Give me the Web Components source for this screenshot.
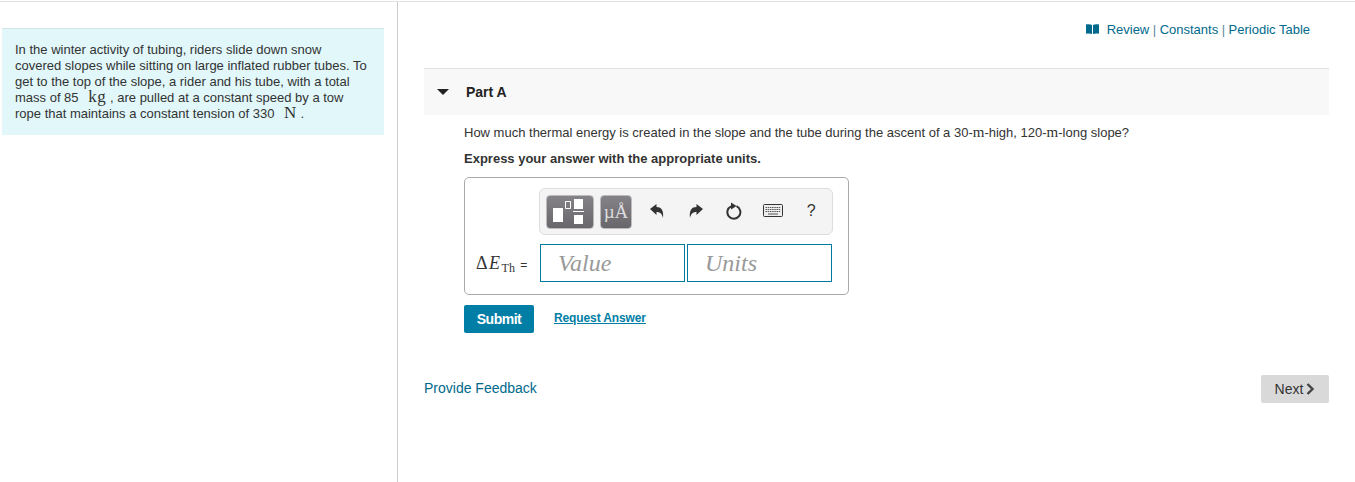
<!DOCTYPE html>
<html>
<head>
<meta charset="utf-8">
<title>Part A</title>
<style>
    html, body { margin: 0; height: 100%; }
    body { font-family: "Liberation Sans", Arial, sans-serif; font-size: 13px; color: #333; background: #fff; }
</style>
</head>
<body>
<assignment-page>
    <info-panel slot="left">
        In the winter activity of tubing, riders slide down snow covered slopes while sitting on large inflated rubber tubes. To get to the top of the slope, a rider and his tube, with a total mass of 85 <math-unit>kg</math-unit> , are pulled at a constant speed by a tow rope that maintains a constant tension of 330 <math-unit>N</math-unit> .
    </info-panel>
    <resource-links slot="right"></resource-links>
    <part-header slot="right">Part A</part-header>
    <part-body slot="right">
        How much thermal energy is created in the slope and the tube during the ascent of a 30-<math-unit tight>m</math-unit>-high, 120-<math-unit tight>m</math-unit>-long slope?
    </part-body>
    <page-footer slot="right"></page-footer>
</assignment-page>

<script>
// no whitespace around the markup: the host is inline and it would show up as a gap
const mathUnitTemplate = document.createElement('template');
mathUnitTemplate.innerHTML = `<style>
        :host {
            display: inline;
            font-family: "Liberation Serif", "Times New Roman", serif;
            font-size: 17px;
            line-height: 0;
            letter-spacing: 0.6px;
            padding: 0 0 0 6px;
        }
        :host([tight]) {
            font-size: 15px;
            letter-spacing: 0;
            padding: 0;
        }
    </style><slot></slot>`;
class MathUnit extends HTMLElement {
    constructor() {
        super();
        this.attachShadow({ mode: 'open' }).appendChild(mathUnitTemplate.content.cloneNode(true));
    }
}
customElements.define('math-unit', MathUnit);

const pageTemplate = document.createElement('template');
pageTemplate.innerHTML = `
    <style>
        :host {
            display: grid;
            grid-template-columns: 398px 1fr;
            box-sizing: border-box;
            height: 481px;
            margin-top: 1px;
            border-top: 1px solid #e3e3e3;
        }
        .left {
            border-right: 1px solid #ccc;
            padding: 26px 13px 0 2px;
        }
        .right {
            display: flex;
            flex-direction: column;
            padding: 0 26px 0 26px;
        }
    </style>
    <div class="left"><slot name="left"></slot></div>
    <div class="right"><slot name="right"></slot></div>
`;
class AssignmentPage extends HTMLElement {
    constructor() {
        super();
        this.attachShadow({ mode: 'open' }).appendChild(pageTemplate.content.cloneNode(true));
    }
}
customElements.define('assignment-page', AssignmentPage);

const infoTemplate = document.createElement('template');
infoTemplate.innerHTML = `
    <style>
        :host {
            display: block;
            background: #e1f7fa;
            border-top: 1px solid #d5e3e6;
            padding: 13px 13px 13px 13px;
            font-size: 13px;
            line-height: 16px;
            color: #333;
        }
    </style>
    <slot></slot>
`;
class InfoPanel extends HTMLElement {
    constructor() {
        super();
        this.attachShadow({ mode: 'open' }).appendChild(infoTemplate.content.cloneNode(true));
    }
}
customElements.define('info-panel', InfoPanel);

const linksTemplate = document.createElement('template');
linksTemplate.innerHTML = `
    <style>
        :host {
            display: flex;
            justify-content: flex-end;
            align-items: center;
            height: 18px;
            margin-top: 18px;
            padding-right: 19px;
            margin-bottom: 30px;
            font-size: 13px;
            color: #00698c;
        }
        svg { margin-right: 8px; }
        .sep { color: #5a8aa0; padding: 0 3.5px; }
    </style>
    <svg width="13" height="10" viewBox="0 0 13 10"><path fill="#00698c" d="M0 0.500C2 0 4.500 0 6 1v9C4.500 9.300 2 9.300 0 9.700zM13 0.500C11 0 8.500 0 7 1v9c1.500-.7 4-.7 6-.3z"/></svg>
    <span>Review</span><span class="sep">|</span><span>Constants</span><span class="sep">|</span><span>Periodic Table</span>
`;
class ResourceLinks extends HTMLElement {
    constructor() {
        super();
        this.attachShadow({ mode: 'open' }).appendChild(linksTemplate.content.cloneNode(true));
    }
}
customElements.define('resource-links', ResourceLinks);

const headerTemplate = document.createElement('template');
headerTemplate.innerHTML = `
    <style>
        :host {
            display: flex;
            align-items: center;
            box-sizing: border-box;
            height: 47px;
            background: #f8f8f8;
            border-top: 1px solid #e0e0e0;
            font-size: 14px;
            font-weight: bold;
            color: #222;
        }
        .caret {
            width: 0;
            height: 0;
            margin: 0 17px 0 13px;
            border-left: 6px solid transparent;
            border-right: 6px solid transparent;
            border-top: 6px solid #222;
        }
    </style>
    <span class="caret"></span><slot></slot>
`;
class PartHeader extends HTMLElement {
    constructor() {
        super();
        this.attachShadow({ mode: 'open' }).appendChild(headerTemplate.content.cloneNode(true));
    }
}
customElements.define('part-header', PartHeader);

const toolbarTemplate = document.createElement('template');
toolbarTemplate.innerHTML = `
    <style>
        :host {
            display: flex;
            align-items: center;
            box-sizing: border-box;
            width: 294px;
            height: 47px;
            margin-left: 74px;
            padding: 0 0 0 6px;
            background: #f4f4f4;
            border: 1px solid #ddd;
            border-radius: 6px;
        }
        .tmpl {
            flex: none;
            display: flex;
            align-items: center;
            justify-content: center;
            height: 34px;
            border-radius: 4px;
            background: linear-gradient(#858388, #68666b);
            border: 1px solid #bbb;
            box-sizing: border-box;
        }
        .frac { width: 48px; margin-right: 6px; }
        .unit {
            width: 32px;
            margin-right: 6px;
            font-family: "Liberation Serif", serif;
            font-size: 19px;
            color: #ddd;
            line-height: 1;
        }
        .tool {
            flex: none;
            display: flex;
            align-items: center;
            justify-content: center;
            width: 38.5px;
            padding-bottom: 2px;
            color: #333;
        }
        .help { font-size: 16px; color: #333; }
    </style>
    <span class="tmpl frac">
        <svg width="46" height="32" viewBox="0 0 46 32">
            <path fill="#fff" d="M6 12h10v14H6zM27 3h9v10h-9zM27 19h9v9h-9zM26 15h11v1H26z"/>
            <path fill="none" stroke="#fff" d="M18.500 5.500h5v7h-5z"/>
        </svg>
    </span>
    <span class="tmpl unit">µÅ</span>
    <span class="tool">
        <svg width="14" height="14" viewBox="0 0 14 14"><path fill="#333" d="M0 5 6.500 0v3C11 3 14 6 13 14 12 10 10.500 8 6.500 8v3z"/></svg>
    </span>
    <span class="tool">
        <svg width="14" height="14" viewBox="0 0 14 14"><path fill="#333" d="M14 5 7.500 0v3C3 3 0 6 1 14 2 10 3.500 8 7.500 8v3z"/></svg>
    </span>
    <span class="tool">
        <svg width="16" height="18" viewBox="0 0 16 18"><path fill="none" stroke="#333" stroke-width="2" d="M10.500 4.200A6.500 6.500 0 1 1 5 4.300"/><path fill="#333" d="M5 0.500 10.500 4 5 7.500z"/></svg>
    </span>
    <span class="tool">
        <svg width="20" height="13" viewBox="0 0 20 13">
            <rect x="0.500" y="0.500" width="19" height="12" rx="1" fill="#eee" stroke="#333"/>
            <path stroke="#555" stroke-dasharray="1.500 0.700" d="M2.500 3.500h15M2.500 5.500h15M2.500 7.500h15"/>
            <path stroke="#555" d="M5 10h10"/>
        </svg>
    </span>
    <span class="tool help">?</span>
`;
class MathToolbar extends HTMLElement {
    constructor() {
        super();
        this.attachShadow({ mode: 'open' }).appendChild(toolbarTemplate.content.cloneNode(true));
    }
}
customElements.define('math-toolbar', MathToolbar);

const answerTemplate = document.createElement('template');
answerTemplate.innerHTML = `
    <style>
        :host {
            display: block;
            box-sizing: border-box;
            width: 385px;
            height: 118px;
            padding: 10px 0 0 0;
            border: 1px solid #aaa;
            border-radius: 5px;
        }
        .row {
            display: flex;
            align-items: center;
            margin-top: 9px;
        }
        .label {
            box-sizing: border-box;
            width: 75px;
            padding-left: 11px;
            font-family: "Liberation Serif", serif;
            font-size: 18px;
            color: #333;
            letter-spacing: 1.5px;
            white-space: nowrap;
        }
        .label sub { font-size: 12px; letter-spacing: 0; vertical-align: -3px; line-height: 0; }
        .label .eq { font-family: "Liberation Sans", sans-serif; font-size: 12px; letter-spacing: 0; margin-left: 2px; }
        input {
            box-sizing: border-box;
            width: 145px;
            height: 38px;
            margin: 0 2px 0 0;
            padding: 0 0 0 17px;
            border: 1px solid #007a9e;
            border-radius: 0;
            outline: none;
            font-family: "Liberation Serif", serif;
            font-style: italic;
            font-size: 24px;
        }
        input::placeholder { color: #999; opacity: 1; }
    </style>
    <math-toolbar></math-toolbar>
    <div class="row">
        <span class="label">Δ<i>E</i><sub>Th</sub><span class="eq"> =</span></span>
        <input placeholder="Value"><input placeholder="Units">
    </div>
`;
class AnswerBox extends HTMLElement {
    constructor() {
        super();
        this.attachShadow({ mode: 'open' }).appendChild(answerTemplate.content.cloneNode(true));
    }
}
customElements.define('answer-box', AnswerBox);

const bodyTemplate = document.createElement('template');
bodyTemplate.innerHTML = `
    <style>
        :host {
            display: block;
            padding: 9px 0 0 40px;
            font-size: 13px;
            color: #333;
        }
        .question { line-height: 18px; }
        .hint { margin-top: 8px; line-height: 18px; font-weight: bold; }
        answer-box { margin-top: 9px; }
        .actions {
            display: flex;
            align-items: center;
            gap: 20px;
            margin-top: 10px;
        }
        button {
            width: 70px;
            height: 28px;
            border: 0;
            border-radius: 2px;
            background: #007ea6;
            color: #fff;
            font: bold 14px "Liberation Sans", sans-serif;
            letter-spacing: -0.5px;
        }
        .request {
            color: #007ea6;
            font-size: 12px;
            font-weight: bold;
            letter-spacing: -0.12px;
            text-decoration: underline;
            padding-bottom: 2px;
        }
    </style>
    <div class="question"><slot></slot></div>
    <div class="hint">Express your answer with the appropriate units.</div>
    <answer-box></answer-box>
    <div class="actions">
        <button>Submit</button>
        <span class="request">Request Answer</span>
    </div>
`;
class PartBody extends HTMLElement {
    constructor() {
        super();
        this.attachShadow({ mode: 'open' }).appendChild(bodyTemplate.content.cloneNode(true));
    }
}
customElements.define('part-body', PartBody);

const footerTemplate = document.createElement('template');
footerTemplate.innerHTML = `
    <style>
        :host {
            display: flex;
            justify-content: space-between;
            align-items: center;
            margin-top: 42px;
            font-size: 14px;
        }
        .feedback { color: #00698c; padding-bottom: 2px; }
        .next {
            display: flex;
            align-items: center;
            justify-content: center;
            gap: 3px;
            width: 68px;
            height: 28px;
            border-radius: 2px;
            background: #d9d9d9;
            color: #333;
        }
    </style>
    <span class="feedback">Provide Feedback</span>
    <span class="next">Next
        <svg width="9" height="12" viewBox="0 0 9 12"><path fill="none" stroke="#444" stroke-width="2.400" d="M1.500 1 6.500 6l-5 5"/></svg>
    </span>
`;
class PageFooter extends HTMLElement {
    constructor() {
        super();
        this.attachShadow({ mode: 'open' }).appendChild(footerTemplate.content.cloneNode(true));
    }
}
customElements.define('page-footer', PageFooter);
</script>
</body>
</html>
